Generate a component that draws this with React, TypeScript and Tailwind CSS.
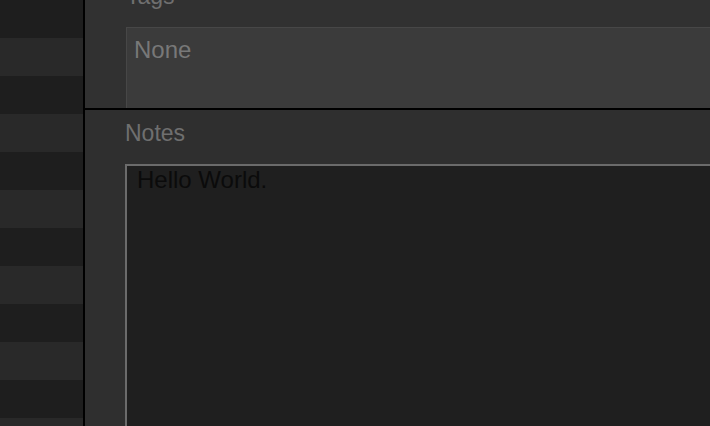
const rows = Array.from({ length: 12 }, (_, i) => i)

export default function App() {
  return (
    <div
      className="flex h-[426px] w-[710px] overflow-hidden bg-[#313131]"
      style={{ fontFamily: '"Liberation Sans", Arial, sans-serif' }}
    >
      {/* list stripes */}
      <div className="flex w-[83px] shrink-0 flex-col">
        {rows.map((i) => (
          <div key={i} className={i % 2 === 0 ? 'h-[38px] shrink-0 bg-[#1e1e1e]' : 'h-[38px] shrink-0 bg-[#292929]'} />
        ))}
      </div>
      <div className="w-[2px] shrink-0 bg-black" />

      <div className="flex min-w-0 flex-1 flex-col">
        {/* tags */}
        <section className="flex h-[110px] shrink-0 flex-col border-b-2 border-black bg-[#313131] pl-[41px]">
          <label className="-mt-[15px] text-[23px] leading-none text-[#6f6f6f]">Tags</label>
          <div className="mt-[19px] w-[700px] flex-1 border-l border-t border-[#474747] bg-[#3b3b3b] pl-[7px] pt-[4px]">
            <span className="text-[24px] text-[#787878]">None</span>
          </div>
        </section>

        {/* notes */}
        <section className="flex flex-1 flex-col bg-[#2f2f2f] pl-[40px] pt-[12px]">
          <label className="text-[23px] leading-none text-[#6f6f6f]">Notes</label>
          <div className="mt-[19px] h-[320px] w-[700px] shrink-0 border-2 border-[#6b6b6b] bg-[#1f1f1f] pl-[10px] pt-[2px]">
            <p className="text-[24px] leading-none text-[#0b0b0b]">Hello World.</p>
          </div>
        </section>
      </div>
    </div>
  )
}
